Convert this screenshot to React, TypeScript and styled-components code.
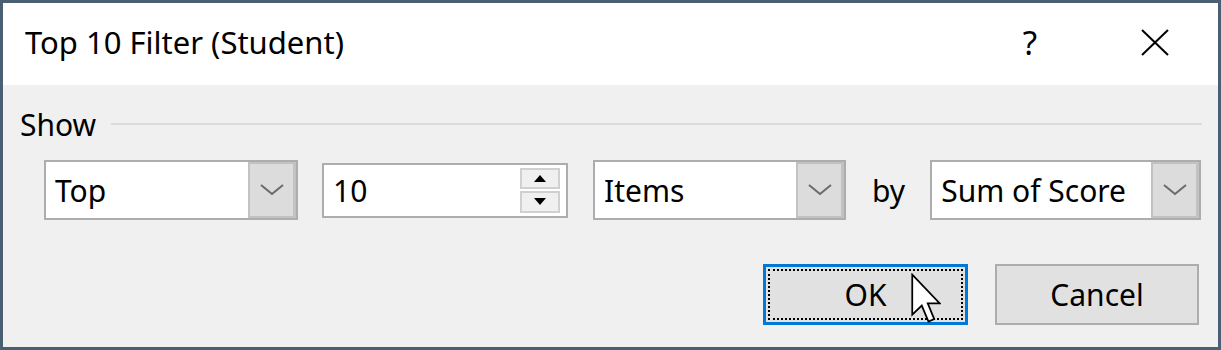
import React from "react";
import styled, { createGlobalStyle } from "styled-components";

const GlobalStyle = createGlobalStyle`
  html, body { margin: 0; padding: 0; background: #ffffff; }
  * { box-sizing: border-box; }
  body { font-family: "Noto Sans", "Open Sans", Arial, sans-serif; color: #000; }
`;

const Window = styled.div`
  width: 1221px;
  height: 350px;
  border: 3px solid #4a5f73;
  display: flex;
  flex-direction: column;
  background: #f0f0f0;
`;

const TitleBar = styled.div`
  height: 82px;
  background: #ffffff;
  display: flex;
  align-items: center;
  padding: 0 0 4px 22px;
`;

const Title = styled.div`
  flex: 1;
  font-size: 31px;
  color: #000;
  white-space: nowrap;
`;

const HelpGlyph = styled.div`
  font-size: 33px;
  width: 20px;
  margin-right: 100px;
  color: #000;
  text-align: center;
`;

const CloseGlyph = styled.div`
  width: 30px;
  height: 30px;
  margin-right: 48px;
  display: flex;
  align-items: center;
  justify-content: center;
`;

const Body = styled.div`
  flex: 1;
  background: #f0f0f0;
  display: flex;
  flex-direction: column;
`;

const GroupHeader = styled.div`
  margin-top: 19px;
  height: 40px;
  display: flex;
  align-items: center;
  padding-left: 17px;
  padding-right: 16px;
`;

const GroupLabel = styled.div`
  font-size: 30px;
  color: #000;
`;

const Rule = styled.div`
  flex: 1;
  height: 2px;
  background: #dcdcdc;
  margin-left: 15px;
`;

const ControlsRow = styled.div`
  margin-top: 16px;
  height: 60px;
  display: flex;
  align-items: center;
  padding-left: 41px;
`;

const Combo = styled.div<{ $w: number; $ml: number }>`
  width: ${(p) => p.$w}px;
  height: 60px;
  margin-left: ${(p) => p.$ml}px;
  border: 2px solid #adadad;
  background: #ffffff;
  display: flex;
  align-items: stretch;
`;

const FieldText = styled.div`
  flex: 1;
  display: flex;
  align-items: center;
  padding-left: 9px;
  font-size: 30px;
  color: #000;
  white-space: nowrap;
`;

const DropButton = styled.div`
  width: 48px;
  background: #dcdcdc;
  border: 2px solid #c2c2c2;
  border-right-width: 3px;
  display: flex;
  align-items: center;
  justify-content: center;
`;

const Spin = styled.div<{ $w: number; $ml: number }>`
  width: ${(p) => p.$w}px;
  height: 55px;
  margin-left: ${(p) => p.$ml}px;
  border: 2px solid #adadad;
  background: #ffffff;
  display: flex;
  align-items: stretch;
`;

const SpinColumn = styled.div`
  width: 40px;
  margin: 3px 6px 3px 0;
  display: flex;
  flex-direction: column;
  gap: 2px;
`;

const SpinButton = styled.div`
  flex: 1;
  background: #f0f0f0;
  border: 2px solid #d0d0d0;
  display: flex;
  align-items: center;
  justify-content: center;
`;

const ByLabel = styled.div`
  font-size: 30px;
  margin: 0 25px 0 26px;
  color: #000;
`;

const ButtonsRow = styled.div`
  margin-top: 44px;
  display: flex;
  justify-content: flex-end;
  gap: 27px;
  padding-right: 19px;
`;

const DialogButton = styled.div<{ $primary?: boolean; $w: number }>`
  position: relative;
  width: ${(p) => p.$w}px;
  height: 61px;
  background: #e1e1e1;
  border: ${(p) => (p.$primary ? "3px solid #0078d7" : "2px solid #adadad")};
  outline: ${(p) => (p.$primary ? "2px dotted #000" : "none")};
  outline-offset: -7px;
  display: flex;
  align-items: center;
  justify-content: center;
  font-size: 30px;
  color: #000;
`;

const Cursor = styled.svg`
  position: absolute;
  left: 145px;
  top: 6px;
`;

const Chevron = () => (
  <svg width="24" height="12" viewBox="0 0 24 12">
    <polyline points="1,1 12,10 23,1" fill="none" stroke="#6a6a6a" strokeWidth="2" />
  </svg>
);

const Arrow = ({ up }: { up?: boolean }) => (
  <svg width="12" height="7" viewBox="0 0 12 7">
    <polygon points={up ? "0,7 12,7 6,0" : "0,0 12,0 6,7"} fill="#000" />
  </svg>
);

export default function App() {
  return (
    <>
      <GlobalStyle />
      <Window>
        <TitleBar>
          <Title>Top 10 Filter (Student)</Title>
          <HelpGlyph>?</HelpGlyph>
          <CloseGlyph>
            <svg width="28" height="27" viewBox="0 0 28 27">
              <line x1="1" y1="1" x2="27" y2="26" stroke="#000" strokeWidth="2" />
              <line x1="27" y1="1" x2="1" y2="26" stroke="#000" strokeWidth="2" />
            </svg>
          </CloseGlyph>
        </TitleBar>
        <Body>
          <GroupHeader>
            <GroupLabel>Show</GroupLabel>
            <Rule />
          </GroupHeader>
          <ControlsRow>
            <Combo $w={254} $ml={0}>
              <FieldText>Top</FieldText>
              <DropButton>
                <Chevron />
              </DropButton>
            </Combo>
            <Spin $w={246} $ml={24}>
              <FieldText>10</FieldText>
              <SpinColumn>
                <SpinButton>
                  <Arrow up />
                </SpinButton>
                <SpinButton>
                  <Arrow />
                </SpinButton>
              </SpinColumn>
            </Spin>
            <Combo $w={253} $ml={25}>
              <FieldText>Items</FieldText>
              <DropButton>
                <Chevron />
              </DropButton>
            </Combo>
            <ByLabel>by</ByLabel>
            <Combo $w={271} $ml={0}>
              <FieldText>Sum of Score</FieldText>
              <DropButton>
                <Chevron />
              </DropButton>
            </Combo>
          </ControlsRow>
          <ButtonsRow>
            <DialogButton $primary $w={205}>
              OK
              <Cursor width="30" height="52" viewBox="0 0 12 20.5">
                <path
                  d="M0.5 0.5 L0.5 16.5 L4.3 12.9 L7 19.3 L9.3 18.3 L6.7 12 L11.5 12 Z"
                  fill="#fff"
                  stroke="#000"
                  strokeWidth="0.7"
                  strokeLinejoin="miter"
                />
              </Cursor>
            </DialogButton>
            <DialogButton $w={204}>Cancel</DialogButton>
          </ButtonsRow>
        </Body>
      </Window>
    </>
  );
}
